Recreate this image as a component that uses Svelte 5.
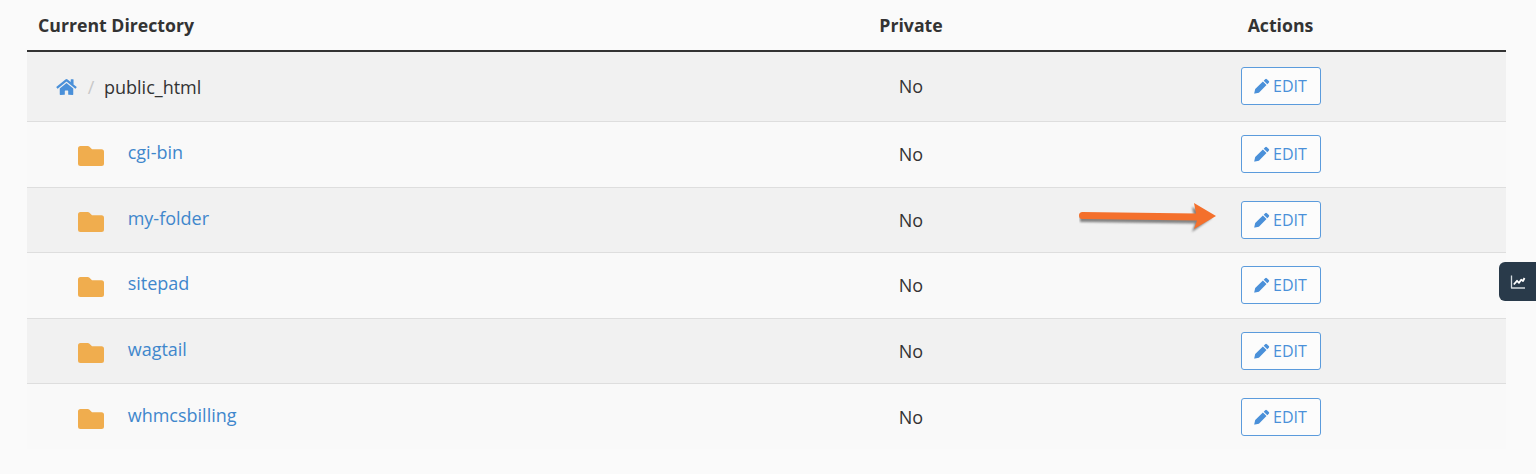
<script>
  let folders = [
    { name: 'cgi-bin', pointed: false },
    { name: 'my-folder', pointed: true },
    { name: 'sitepad', pointed: false },
    { name: 'wagtail', pointed: false },
    { name: 'whmcsbilling', pointed: false }
  ];
</script>

{#snippet editButton()}
  <button class="edit" type="button">
    <svg class="pencil" viewBox="0 0 16 16" aria-hidden="true">
      <path d="M11.2 1.2a1.2 1.2 0 0 1 1.7 0l1.9 1.9a1.2 1.2 0 0 1 0 1.7l-1.5 1.5-3.6-3.6zM8.9 3.5l3.6 3.6-7.6 7.6-3.900.9a.6.6 0 0 1-.7-.7l.9-3.800z" />
    </svg>
    EDIT
  </button>
{/snippet}

<main>
  <table>
    <thead>
      <tr>
        <th class="dir">Current Directory</th>
        <th>Private</th>
        <th>Actions</th>
      </tr>
    </thead>
    <tbody>
      <tr class="current">
        <td class="crumb">
          <svg class="home" viewBox="0 0 576 512" aria-hidden="true">
            <path d="M280.4 148.3 96 300.1V464a16 16 0 0 0 16 16l112-.3a16 16 0 0 0 16-16V368a16 16 0 0 1 16-16h64a16 16 0 0 1 16 16v95.6a16 16 0 0 0 16 16l112 .4a16 16 0 0 0 16-16V300L295.700 148.300a12.200 12.200 0 0 0-15.300 0zM571.600 251.500 488 182.600V44a12 12 0 0 0-12-12h-56a12 12 0 0 0-12 12v72.600L318.500 43a48 48 0 0 0-61 0L4.300 251.500a12 12 0 0 0-1.600 16.900l25.500 31A12 12 0 0 0 45.200 301l235.200-193.700a12.200 12.200 0 0 1 15.300 0L530.900 301a12 12 0 0 0 16.900-1.600l25.500-31a12 12 0 0 0-1.700-16.900z" />
          </svg>
          <span class="sep">/</span>
          <span>public_html</span>
        </td>
        <td class="center">No</td>
        <td class="center">{@render editButton()}</td>
      </tr>
      {#each folders as folder}
        <tr>
          <td class="folder-cell">
            <svg class="folder" viewBox="0 0 26 20" aria-hidden="true">
              <path d="M2.500 0h7.200a2 2 0 0 1 1.500.6L14 3.200h9.500A2.500 2.500 0 0 1 26 5.700v11.800a2.500 2.500 0 0 1-2.500 2.500h-21A2.500 2.500 0 0 1 0 17.500v-15A2.500 2.500 0 0 1 2.500 0z" />
            </svg>
            <a href="#top">{folder.name}</a>
          </td>
          <td class="center">No</td>
          <td class="center action">
            {#if folder.pointed}
              <svg class="arrow" viewBox="0 0 144 40" aria-hidden="true">
                <path class="arrow-shadow" d="M1 15 115 16.500 113 7 133 18 113 32 116 23.500 1 22z" />
                <path class="arrow-body" d="M3.500 12 117 13.500 115 3 137 16 115 29 118 20.500 3.500 19a3.500 3.500 0 0 1 0-7z" />
              </svg>
            {/if}
            {@render editButton()}
          </td>
        </tr>
      {/each}
    </tbody>
  </table>

  <button class="side-tab" type="button" aria-label="Statistics">
    <svg viewBox="0 0 16 16" aria-hidden="true">
      <path class="axis" d="M1.500 1.500v12.500h13.500" />
      <path class="trend" d="M3.800 10.500 7 6.800l2 2 2.200-3 1.800 1.200 1.500-3" />
    </svg>
  </button>
</main>

<style>
  :global(body) {
    margin: 0;
    background: #fafafa;
  }
  main {
    position: relative;
    height: 474px;
    padding: 0 30px 0 27px;
    box-sizing: border-box;
    overflow: hidden;
    font-family: "Open Sans", sans-serif;
    color: #333;
  }
  table {
    width: 1479px;
    table-layout: fixed;
    border-collapse: collapse;
  }
  th:nth-child(1), td:nth-child(1) {
    width: 740px;
  }
  th:nth-child(2), td:nth-child(2) {
    width: 288px;
  }
  th {
    height: 50.500px;
    padding: 0 0 0 0;
    box-sizing: border-box;
    border-bottom: 2.500px solid #333;
    font-size: 17.700px;
    font-weight: 700;
    text-align: center;
  }
  th.dir {
    padding-left: 11px;
    text-align: left;
  }
  tbody tr {
    height: 65.500px;
    border-bottom: 1px solid #dedede;
    background: #f9f9f9;
  }
  tbody tr:last-child {
    border-bottom: 0;
  }
  tbody tr:nth-child(odd) {
    background: #f1f1f1;
  }
  tbody tr.current {
    height: 71px;
  }
  td {
    padding: 0;
    font-size: 18px;
    color: #333;
  }
  td.center {
    text-align: center;
  }
  .crumb {
    padding-left: 29px;
  }
  .crumb > * {
    vertical-align: middle;
  }
  .home {
    width: 21px;
    height: 18px;
    fill: #4a90d9;
  }
  .sep {
    margin: 0 5px 0 6px;
    color: #c8c8c8;
  }
  .folder-cell {
    padding-left: 51px;
    padding-bottom: 1px;
  }
  .folder {
    width: 26px;
    height: 20px;
    margin-right: 19px;
    fill: #f0ad4e;
    vertical-align: -6px;
  }
  a {
    color: #3f87cc;
    text-decoration: none;
    position: relative;
    top: -1px;
  }
  .action {
    position: relative;
  }
  .edit {
    display: inline-flex;
    align-items: center;
    justify-content: center;
    gap: 3px;
    width: 80px;
    height: 38px;
    padding: 0;
    border: 1.500px solid #5b9bdc;
    border-radius: 3px;
    background: #fcfcfc;
    color: #4a90d9;
    font: 400 16px "Open Sans", sans-serif;
    vertical-align: middle;
  }
  .pencil {
    width: 16px;
    height: 16px;
    fill: #4a90d9;
  }
  .arrow {
    position: absolute;
    left: 24px;
    top: 12px;
    width: 144px;
    height: 40px;
  }
  .arrow-shadow {
    fill: #555;
    opacity: .7;
    filter: blur(1px);
  }
  .arrow-body {
    fill: #f4702c;
  }
  .side-tab {
    position: absolute;
    right: 0;
    top: 262px;
    width: 37px;
    height: 39px;
    padding: 0 0 0 0;
    border: 0;
    border-radius: 6px 0 0 6px;
    background: #293a4a;
  }
  .side-tab svg {
    display: block;
    width: 16px;
    height: 16px;
    margin: 0 0 0 11px;
    fill: none;
    stroke-linejoin: round;
  }
  .axis {
    stroke: #d5dbe0;
    stroke-width: 1.300;
  }
  .trend {
    stroke: #fff;
    stroke-width: 1.800;
  }
</style>
